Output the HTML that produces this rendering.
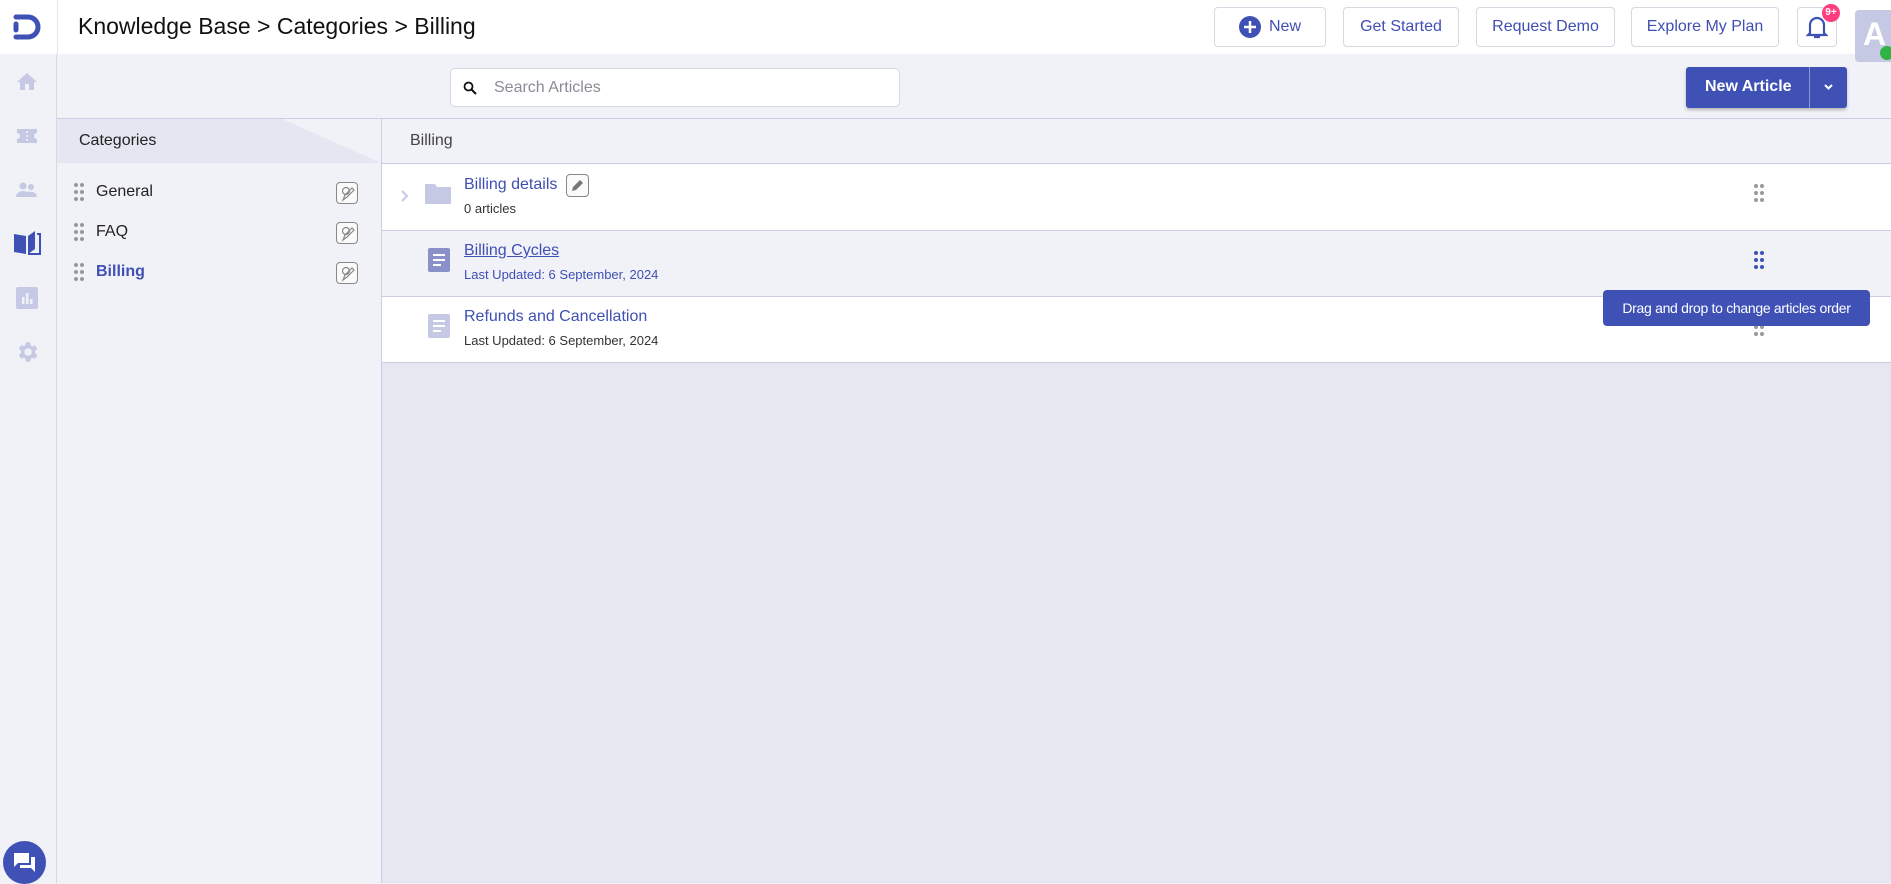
<!DOCTYPE html>
<html><head><meta charset="utf-8"><style>
*{box-sizing:border-box;margin:0;padding:0}
body{width:1891px;height:883px;overflow:hidden;background:#f1f2f7;font-family:"Liberation Sans",Arial,sans-serif;position:relative}
.abs{position:absolute}
.side{left:0;top:0;width:57px;height:883px;background:#f1f2f7;border-right:1px solid #d8d9e0}
.hdr{left:0;top:0;right:0;height:54px;background:#fff}
.title{left:78px;top:13px;font-size:23px;color:#111}
.btn{top:7px;height:40px;border:1px solid #d6d8e2;border-radius:4px;background:#fff;color:#3f4fb3;font-size:16px;display:flex;align-items:center;justify-content:center}
.search{left:450px;top:68px;width:450px;height:39px;background:#fff;border:1px solid #d6d8e2;border-radius:5px}
.search span{position:absolute;left:43px;top:10px;color:#8a8c96;font-size:16px}
.na{left:1686px;top:67px;width:161px;height:41px;background:#3f51b5;border-radius:3px;box-shadow:0 2px 3px rgba(0,0,0,.25);color:#fff;font-weight:bold;font-size:16px}
.line{background:#c9cde6}
.cat{font-size:16px;color:#222}
.dots{width:10px;height:18px}
.ed{width:22px;height:22px;border:1px solid #888;border-radius:4px;background:#fafafa}
.row{left:382px;right:0;border-bottom:1px solid #c9cde6}
.lnk{color:#3f4fb3;font-size:16px}
.sub{font-size:13px}
</style></head><body>
<div class="abs side"></div>
<div class="abs hdr"></div>
<svg class="abs" style="left:12px;top:12px" width="30" height="30" viewBox="0 0 30 30"><path d="M4 5h12a10 10 0 0 1 0 20H4" fill="none" stroke="#3f51b5" stroke-width="5" stroke-linecap="round"/><path d="M4 12v6" stroke="#3f51b5" stroke-width="5" stroke-linecap="round"/></svg>
<div class="abs" style="left:57px;top:0;width:1px;height:54px;background:#e6e7ee"></div>
<!-- sidebar icons -->
<svg class="abs" style="left:14px;top:70px" width="26" height="24" viewBox="0 0 24 24"><path d="M10 20v-6h4v6h5v-8h3L12 3 2 12h3v8z" fill="#c5c9e3"/></svg>
<svg class="abs" style="left:14px;top:124px" width="26" height="24" viewBox="0 0 24 24"><path d="M2 5h20v4a3 3 0 0 0 0 6v4H2v-4a3 3 0 0 0 0-6z" fill="#c5c9e3"/><circle cx="12" cy="8" r="1" fill="#f1f2f7"/><circle cx="12" cy="12" r="1" fill="#f1f2f7"/><circle cx="12" cy="16" r="1" fill="#f1f2f7"/></svg>
<svg class="abs" style="left:14px;top:178px" width="26" height="24" viewBox="0 0 24 24"><circle cx="8" cy="8" r="3.5" fill="#c5c9e3"/><circle cx="16" cy="9" r="3" fill="#c5c9e3"/><path d="M1 19c0-4 4-6 7-6s7 2 7 6zM14 19c0-2-1-4-2-5 3-1 10 0 10 5z" fill="#c5c9e3"/></svg>
<svg class="abs" style="left:13px;top:230px" width="28" height="26" viewBox="0 0 28 26"><path d="M1 4l12 2v18L1 22z" fill="#3f51b5"/><path d="M15 6l7-5v18l-7 5z" fill="#3f51b5"/><path d="M24 4h3v20H15" fill="none" stroke="#3f51b5" stroke-width="2"/></svg>
<svg class="abs" style="left:15px;top:286px" width="24" height="24" viewBox="0 0 24 24"><rect x="1" y="1" width="22" height="22" rx="2" fill="#c5c9e3"/><rect x="7" y="11" width="2.5" height="7" fill="#f1f2f7"/><rect x="11" y="7" width="2.5" height="11" fill="#f1f2f7"/><rect x="15" y="13" width="2.5" height="5" fill="#f1f2f7"/></svg>
<svg class="abs" style="left:14px;top:339px" width="26" height="26" viewBox="0 0 24 24"><path fill="#c5c9e3" d="M19.4 13a7.5 7.5 0 0 0 0-2l2.1-1.6-2-3.5-2.5 1a7 7 0 0 0-1.7-1L15 3h-4l-.4 2.6a7 7 0 0 0-1.7 1l-2.5-1-2 3.5L6.6 11a7.5 7.5 0 0 0 0 2l-2.1 1.6 2 3.5 2.5-1a7 7 0 0 0 1.7 1L11 21h4l.4-2.6a7 7 0 0 0 1.7-1l2.5 1 2-3.5zM13 15.5a3.5 3.5 0 1 1 0-7 3.5 3.5 0 0 1 0 7z"/></svg>
<div class="abs" style="left:3px;top:841px;width:43px;height:43px;border-radius:50%;background:#3f51b5"></div>
<svg class="abs" style="left:12px;top:851px" width="26" height="24" viewBox="0 0 26 24"><path d="M2 2h15v10H6l-4 4z" fill="#fff"/><path d="M19 6h4v15l-4-4H8v-3h11z" fill="#fff"/></svg>

<div class="abs title">Knowledge Base &gt; Categories &gt; Billing</div>
<div class="abs btn" style="left:1214px;width:112px"><svg width="22" height="22" viewBox="0 0 22 22" style="margin-right:8px"><circle cx="11" cy="11" r="11" fill="#3f51b5"/><path d="M11 5v12M5 11h12" stroke="#fff" stroke-width="2.5"/></svg>New</div>
<div class="abs btn" style="left:1343px;width:116px">Get Started</div>
<div class="abs btn" style="left:1476px;width:139px">Request Demo</div>
<div class="abs btn" style="left:1631px;width:148px">Explore My Plan</div>
<div class="abs btn" style="left:1797px;width:40px"><svg width="22" height="24" viewBox="0 0 22 24"><path d="M4 18V10a7 7 0 0 1 14 0v8l2 2H2z" fill="none" stroke="#3f51b5" stroke-width="2.2"/><path d="M8 22h6" stroke="#3f51b5" stroke-width="2.2"/></svg></div>
<div class="abs" style="left:1822px;top:4px;width:18px;height:18px;border-radius:50%;background:#ff3d7f;color:#fff;font-size:10px;font-weight:bold;text-align:center;line-height:18px">9+</div>
<div class="abs" style="left:1855px;top:10px;width:40px;height:52px;background:#c5c9e3;border-radius:4px;color:#fff;font-size:32px;font-weight:bold;padding:6px 0 0 8px">A</div>
<div class="abs" style="left:1880px;top:46px;width:14px;height:14px;border-radius:50%;background:#2fb344"></div>

<div class="abs search"><svg class="abs" style="left:12px;top:12px" width="14" height="14" viewBox="0 0 14 14"><circle cx="5.5" cy="5.5" r="4" fill="none" stroke="#111" stroke-width="1.8"/><path d="M8.5 8.5L13 13" stroke="#111" stroke-width="2"/></svg><span>Search Articles</span></div>
<div class="abs na"><span class="abs" style="left:19px;top:11px">New Article</span><div class="abs" style="left:123px;top:0;width:1px;height:41px;background:#8c97d8"></div><svg class="abs" style="left:137px;top:16px" width="11" height="8" viewBox="0 0 11 8"><path d="M2 2l3.5 3.5L9 2" fill="none" stroke="#fff" stroke-width="2"/></svg></div>

<div class="abs line" style="left:57px;top:118px;right:0;height:1px"></div>
<div class="abs" style="left:57px;top:119px;width:324px;height:44px;background:#e4e6f1;clip-path:polygon(0 0,225px 0,100% 100%,0 100%)"></div>
<div class="abs cat" style="left:79px;top:132px">Categories</div>
<div class="abs line" style="left:381px;top:118px;width:1px;height:765px"></div>

<svg width="0" height="0" style="position:absolute"><defs><g id="d"><circle cx="2" cy="2" r="2"/><circle cx="8" cy="2" r="2"/><circle cx="2" cy="9" r="2"/><circle cx="8" cy="9" r="2"/><circle cx="2" cy="16" r="2"/><circle cx="8" cy="16" r="2"/></g>
<g id="e"><circle cx="9" cy="8" r="3.5" fill="none" stroke="#888" stroke-width="1.2"/><path d="M6 17l2-5 7-7 2 2-7 7z" fill="none" stroke="#888" stroke-width="1.2"/></g></defs></svg>
<svg class="abs dots" style="left:74px;top:183px" fill="#999"><use href="#d"/></svg>
<div class="abs cat" style="left:96px;top:183px">General</div>
<svg class="abs dots" style="left:74px;top:223px" fill="#999"><use href="#d"/></svg>
<div class="abs cat" style="left:96px;top:223px">FAQ</div>
<svg class="abs dots" style="left:74px;top:263px" fill="#999"><use href="#d"/></svg>
<div class="abs cat" style="left:96px;top:263px;color:#3f4fb3;font-weight:bold">Billing</div>
<div class="abs ed" style="left:336px;top:182px"><svg width="20" height="20"><use href="#e"/></svg></div>
<div class="abs ed" style="left:336px;top:222px"><svg width="20" height="20"><use href="#e"/></svg></div>
<div class="abs ed" style="left:336px;top:262px"><svg width="20" height="20"><use href="#e"/></svg></div>

<div class="abs" style="left:410px;top:132px;font-size:16px;color:#444">Billing</div>
<div class="abs line" style="left:382px;top:163px;right:0;height:1px"></div>
<div class="abs row" style="top:164px;height:67px;background:#fff"></div>
<div class="abs row" style="top:231px;height:66px;background:#f1f2f7"></div>
<div class="abs row" style="top:297px;height:66px;background:#fff"></div>
<div class="abs" style="left:382px;top:363px;right:0;bottom:0;background:#e5e7f1"></div>

<svg class="abs" style="left:400px;top:189px" width="10" height="14" viewBox="0 0 10 14"><path d="M2 2l5 5-5 5" fill="none" stroke="#c5c9e3" stroke-width="2"/></svg>
<svg class="abs" style="left:425px;top:182px" width="26" height="22" viewBox="0 0 26 22"><path d="M0 2h10l2 3h14v17H0z" fill="#c5c9e3"/></svg>
<div class="abs lnk" style="left:464px;top:176px">Billing details</div>
<div class="abs" style="left:566px;top:174px;width:23px;height:23px;border:1px solid #888;border-radius:4px;background:#fafafa"><svg width="21" height="21" viewBox="0 0 21 21"><path d="M5 16l1-4 7-7 3 3-7 7z" fill="#777"/></svg></div>
<div class="abs sub" style="left:464px;top:201px;color:#333">0 articles</div>
<svg class="abs" style="left:1754px;top:184px" width="12" height="18" fill="#9a9a9a"><use href="#d"/></svg>

<svg class="abs" style="left:428px;top:248px" width="22" height="24" viewBox="0 0 22 24"><rect width="22" height="24" rx="2" fill="#8a90c8"/><path d="M5 7h12M5 12h12M5 17h8" stroke="#fff" stroke-width="2"/></svg>
<div class="abs lnk" style="left:464px;top:242px;text-decoration:underline">Billing Cycles</div>
<div class="abs sub" style="left:464px;top:267px;color:#3f4fb3">Last Updated: 6 September, 2024</div>
<svg class="abs" style="left:1754px;top:251px" width="12" height="18" fill="#3f51b5"><use href="#d"/></svg>

<svg class="abs" style="left:428px;top:314px" width="22" height="24" viewBox="0 0 22 24"><rect width="22" height="24" rx="2" fill="#c5c9e3"/><path d="M5 7h12M5 12h12M5 17h8" stroke="#fff" stroke-width="2"/></svg>
<div class="abs lnk" style="left:464px;top:308px">Refunds and Cancellation</div>
<div class="abs sub" style="left:464px;top:333px;color:#333">Last Updated: 6 September, 2024</div>
<svg class="abs" style="left:1754px;top:318px" width="12" height="18" fill="#9a9a9a"><use href="#d"/></svg>

<div class="abs" style="left:1603px;top:290px;width:267px;height:36px;background:#3f51b5;border-radius:4px;color:#fff;font-size:14px;line-height:36px;text-align:center;letter-spacing:-0.3px">Drag and drop to change articles order</div>
</body></html>
